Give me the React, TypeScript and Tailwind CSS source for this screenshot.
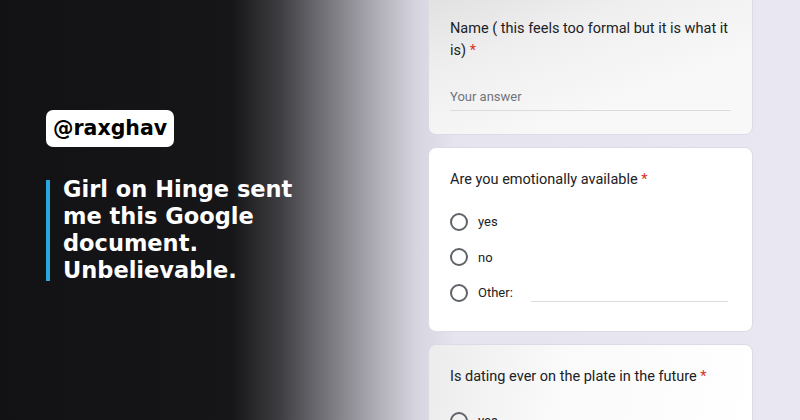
import React from 'react';

const options = ['yes', 'no'];

function Radio({ label, other }: { label: string; other?: boolean }) {
  return (
    <div className="flex items-center h-[35.5px]">
      <div className="w-[18px] h-[18px] rounded-full border-2 border-[#5f6368] shrink-0" />
      <span className="ml-[10px] text-[13px] text-[#202124]">{label}</span>
      {other && <div className="ml-[18px] mt-[18px] h-px w-[197px] bg-[#dadce0]" />}
    </div>
  );
}

function Title({ children }: { children: React.ReactNode }) {
  return (
    <p className="text-[14.5px] leading-[22px] text-[#202124]">
      {children} <span className="text-[#d93025]">*</span>
    </p>
  );
}

export default function App() {
  return (
    <div
      className="w-[800px] h-[420px] overflow-hidden flex bg-[linear-gradient(90deg,#121214_0%,#161618_29%,#3e3e42_35%,#77767d_41%,#aeadb5_47%,#d6d4df_52%,#e6e4ef_57%,#e9e7f1_100%)]"
      style={{ fontFamily: 'Roboto, "Liberation Sans", sans-serif' }}
    >
      {/* left: handle + headline */}
      <div className="w-[428px] shrink-0 pl-[46px] pt-[110px]" style={{ fontFamily: '"DejaVu Sans", "Liberation Sans", sans-serif' }}>
        <div className="inline-flex items-center h-[37px] px-[7px] bg-white rounded-[7px]">
          <span className="text-[20.5px] font-bold text-black">@raxghav</span>
        </div>
        <div className="mt-[33px] flex">
          <div className="w-[4px] h-[101px] bg-[#29a8e0] shrink-0" />
          <p className="ml-[13px] -mt-[4px] text-[22.5px] leading-[27px] font-bold text-white">
            Girl on Hinge sent
            <br />
            me this Google
            <br />
            document.
            <br />
            Unbelievable.
          </p>
        </div>
      </div>

      {/* right: form cards */}
      <div className="w-[325px] shrink-0 flex flex-col gap-[12px]">
        <div className="shrink-0 -mt-[20px] h-[155px] rounded-[8px] bg-[linear-gradient(160deg,#dededf_0%,#efefef_35%,#f8f8f8_70%)] border border-[#dcdae4] px-[21px] pt-[37px]">
          <Title>Name ( this feels too formal but it is what it is)</Title>
          <div className="mt-[25px] text-[13px] text-[#70757a]">Your answer</div>
          <div className="mt-[3px] h-px bg-[#dadce0]" />
        </div>

        <div className="shrink-0 h-[185px] rounded-[8px] bg-white border border-[#dcdae4] px-[21px] pt-[21px]">
          <Title>Are you emotionally available</Title>
          <div className="mt-[13px]">
            {options.map((o) => (
              <Radio key={o} label={o} />
            ))}
            <Radio label="Other:" other />
          </div>
        </div>

        <div className="shrink-0 h-[120px] rounded-[8px] bg-[linear-gradient(100deg,#ececed_0%,#fafafa_40%,#ffffff_100%)] border border-[#dcdae4] px-[21px] pt-[21px]">
          <Title>Is dating ever on the plate in the future</Title>
          <div className="mt-[15px]">
            <Radio label="yes" />
          </div>
        </div>
      </div>
    </div>
  );
}
